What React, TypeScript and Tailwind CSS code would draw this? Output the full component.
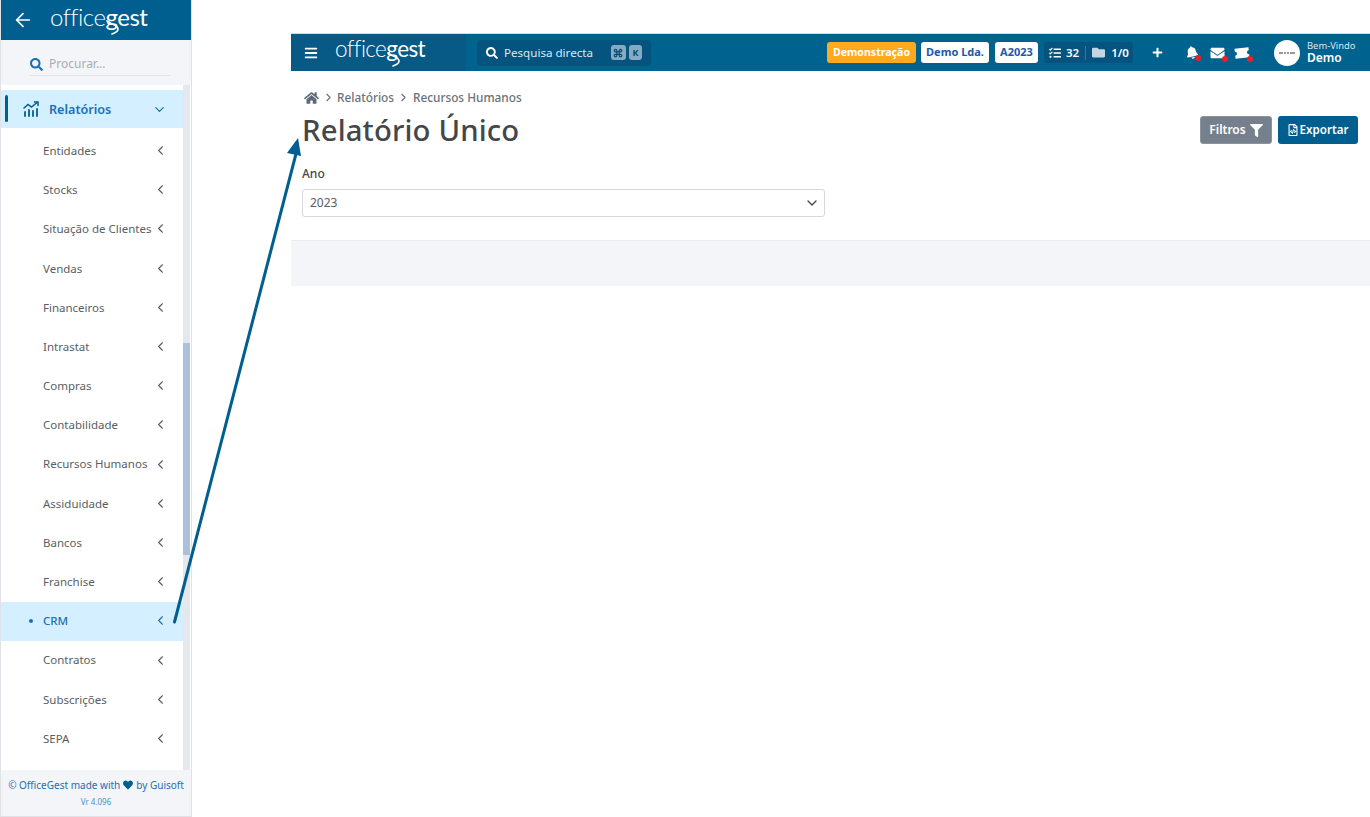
import { ChevronDown, ChevronLeft, ChevronRight, ArrowLeft, Command } from 'lucide-react'
import { FaBars, FaBell, FaEnvelope, FaFilter, FaFolder, FaHeart, FaHome, FaPlus, FaRegFileCode, FaSearch, FaTasks } from 'react-icons/fa'

const MENU = ['Entidades', 'Stocks', 'Situação de Clientes', 'Vendas', 'Financeiros', 'Intrastat', 'Compras', 'Contabilidade', 'Recursos Humanos', 'Assiduidade', 'Bancos', 'Franchise', 'CRM', 'Contratos', 'Subscrições', 'SEPA']

function Logo({ small }: { small?: boolean }) {
    return (
        <span className={`relative inline-block font-['Lato',sans-serif] font-light text-white leading-none ${small ? 'text-[22.5px] tracking-[-0.6px]' : 'text-[24px] tracking-[-0.5px]'}`}>
            office<span className="font-normal">gest</span>
            {/* swoosh on the g's tail */}
            <svg className={`absolute pointer-events-none ${small ? 'left-[51px] top-[13px]' : 'left-[55px] top-[14px]'}`} width="18" height="20" viewBox="0 0 18 20" fill="none">
                <path d="M2 2c2 3 11 3 11 8 0 3-3 4-6 5" stroke="white" strokeWidth="1.7" strokeLinecap="round" />
            </svg>
        </span>
    )
}

function Dot() {
    return <span className="absolute -right-[3px] -bottom-[2px] w-[6px] h-[6px] rounded-full bg-[#e8202a]" />
}

function Sidebar() {
    return (
        <aside className="w-[192px] h-[817px] shrink-0 flex flex-col bg-white border-r border-l border-[#dfe3e8] border-b">
            <div className="h-[40px] bg-[#005f8f] flex items-center shrink-0">
                <ArrowLeft className="w-[22px] h-[22px] text-white ml-[11px]" strokeWidth={1.75} />
                <div className="ml-[16px] -mt-[4px]"><Logo /></div>
            </div>
            <div className="h-[45px] bg-[#f4f5f8] shrink-0 pt-[14px] pl-[29px] pr-[21px]">
                <div className="flex items-center gap-[6px] border-b border-[#e2e5ea] h-[22px] pb-[1px]">
                    <FaSearch className="w-[13px] h-[13px] text-[#1b6fb5]" />
                    <span className="text-[12px] text-[#a9adb3]">Procurar...</span>
                </div>
            </div>
            <div className="flex-1 flex min-h-0">
                <div className="w-[182px] pt-[5px]">
                    <div className="h-[38px] bg-[#d4efff] flex items-center relative">
                        <span className="absolute left-[4px] top-[5px] w-[3px] h-[27px] rounded bg-[#005f8f]" />
                        <svg className="ml-[22px]" width="17" height="16" viewBox="0 0 17 16" fill="none" stroke="#005f8f" strokeWidth="1.5" strokeLinecap="round">
                            <path d="M1 7l4-3.5 3.5 2.5L14 1.5" />
                            <path d="M11.5 1H15v3.5" />
                            <path d="M2 11v4M6 9v6M10 10v5M14 8v7" strokeWidth="1.8" />
                        </svg>
                        <span className="ml-[9px] text-[12.6px] font-semibold text-[#1b6fb5] mt-[3px]">Relatórios</span>
                        <ChevronDown className="ml-auto mr-[16px] w-[15px] h-[15px] text-[#1b6fb5]" strokeWidth={2} />
                    </div>
                    <div className="pt-[4px]">
                        {MENU.map(item => {
                            const active = item === 'CRM'
                            return (
                                <div key={item} className={`h-[39.2px] pb-[2px] flex items-center relative ${active ? 'bg-[#d4efff] text-[#1b6fb5] font-medium' : 'text-[#5a5e63]'}`}>
                                    {active && <span className="absolute left-[28px] w-[4px] h-[4px] rounded-full bg-[#1b6fb5]" />}
                                    <span className="ml-[42px] text-[11.5px] whitespace-nowrap">{item}</span>
                                    <ChevronLeft className={`absolute left-[152px] w-[15px] h-[15px] ${active ? 'text-[#1b6fb5]' : 'text-[#5a5e63]'}`} strokeWidth={1.75} />
                                </div>
                            )
                        })}
                    </div>
                </div>
                <div className="w-[7px] bg-[#e4e7ec] flex flex-col">
                    <div className="h-[258px]" />
                    <div className="h-[212px] bg-[#a9c1da]" />
                </div>
            </div>
            <div className="h-[46px] shrink-0 bg-[#f4f5f8] flex flex-col items-center pt-[8px]">
                <div className="text-[10px] text-[#1b6fb5] whitespace-nowrap leading-[14px] flex items-center gap-[3px]">
                    © OfficeGest made with <FaHeart className="w-[10px] h-[10px] text-[#005f8f]" /> by Guisoft
                </div>
                <div className="text-[8px] text-[#4f8fc4] mt-[4px]">Vr 4.096</div>
            </div>
        </aside>
    )
}

function TopBar() {
    return (
        <header className="h-[38px] bg-[#00628f] flex items-center text-white border-t border-[#cfdde6]">
            <div className="w-[175px] h-full bg-[#075a85] flex items-center shrink-0">
                <FaBars className="ml-[13px] w-[14px] h-[14px]" />
                <div className="ml-[17px] -mt-[4px]"><Logo small /></div>
            </div>
            <div className="ml-[11px] w-[174px] h-[26px] rounded bg-[#05537f] flex items-center pl-[9px] shrink-0">
                <FaSearch className="w-[12px] h-[12px]" />
                <span className="ml-[6px] text-[11.6px] text-[#dce8f0] whitespace-nowrap">Pesquisa directa</span>
                <span className="ml-[18px] w-[15px] h-[15px] rounded-[3px] bg-[#86aac1] flex items-center justify-center"><Command className="w-[10px] h-[10px] text-[#0a4e75]" strokeWidth={3} /></span>
                <span className="ml-[3px] w-[13px] h-[15px] rounded-[3px] bg-[#86aac1] text-[#0a4e75] text-[9px] font-bold flex items-center justify-center">K</span>
            </div>
            <div className="ml-auto flex items-center h-full">
                <span className="h-[21px] w-[89px] rounded-[3px] bg-[#ffa91f] text-white text-[10.6px] font-bold flex items-center justify-center">Demonstração</span>
                <span className="ml-[5px] h-[21px] w-[68px] rounded-[3px] bg-white text-[#1d5aa6] text-[11px] font-bold flex items-center justify-center">Demo Lda.</span>
                <span className="ml-[6px] h-[21px] w-[43px] rounded-[3px] bg-white text-[#1d5aa6] text-[11px] font-bold flex items-center justify-center">A2023</span>
                <div className="ml-[6px] h-[21px] w-[89px] rounded-[3px] bg-[#05537f] flex items-center pl-[5px] text-[11.5px] font-semibold">
                    <FaTasks className="w-[12px] h-[12px]" />
                    <span className="ml-[5px]">32</span>
                    <span className="ml-[6px] w-px h-[14px] bg-[#2f7aa5]" />
                    <FaFolder className="ml-[6px] w-[13px] h-[13px] text-[#c4d6e2]" />
                    <span className="ml-[6px]">1/0</span>
                </div>
                <FaPlus className="ml-[19px] w-[11px] h-[11px]" />
                <span className="ml-[23px] relative"><FaBell className="w-[12px] h-[13px] -rotate-12" /><Dot /></span>
                <span className="ml-[12px] relative"><FaEnvelope className="w-[15px] h-[14px]" /><Dot /></span>
                <span className="ml-[9px] relative">
                    <svg className="block -rotate-6" width="16" height="14" viewBox="0 0 16 14" fill="white">
                        <path d="M1 2h14v3a2 2 0 0 0 0 4v3H1V9a2 2 0 0 0 0-4z" />
                    </svg>
                    <Dot />
                </span>
                <span className="ml-[24px] w-[26px] h-[26px] rounded-full bg-white flex items-center justify-center">
                    <svg width="16" height="4" viewBox="0 0 16 4" stroke="#333" strokeWidth="1"><path d="M0 2h4M6 1v2M8 2h2M12 1v2M13 2h3" /></svg>
                </span>
                <div className="ml-[7px] mr-[15px] w-[48px] flex flex-col pt-[1px]">
                    <span className="text-[9.4px] leading-[10px] text-[#dce8f0] whitespace-nowrap">Bem-Vindo</span>
                    <span className="text-[12px] leading-[14px] font-semibold">Demo</span>
                </div>
            </div>
        </header>
    )
}

function Content() {
    return (
        <main className="flex-1 min-w-0 pt-[33px]">
            <TopBar />
            <div className="pl-[11px] pr-[12px] pt-[18px] relative">
                <div className="flex items-center text-[11.8px] font-medium text-[#6b7178] h-[17px] ml-[2px]">
                    <FaHome className="w-[15px] h-[14px] text-[#5f6b78]" />
                    <ChevronRight className="ml-[3px] w-[13px] h-[13px]" strokeWidth={2} />
                    <span className="ml-[2px]">Relatórios</span>
                    <ChevronRight className="ml-[3px] w-[13px] h-[13px]" strokeWidth={2} />
                    <span className="ml-[3px]">Recursos Humanos</span>
                </div>
                <div className="flex items-start justify-between mt-[4px]">
                    <h1 className="text-[29.3px] leading-[40px] font-medium text-[#444649] tracking-[0.15px]">Relatório Único</h1>
                    <div className="flex gap-[6px] mt-[6px]">
                        <button className="h-[28px] w-[72px] rounded-[3px] bg-[#75808c] border border-[#8a949f] text-white text-[12px] font-semibold flex items-center justify-center gap-[4px]">
                            Filtros <FaFilter className="w-[13px] h-[13px]" />
                        </button>
                        <button className="h-[28px] w-[80px] rounded-[3px] bg-[#005f8f] text-white text-[11.6px] font-semibold flex items-center justify-center gap-[2px]">
                            <FaRegFileCode className="w-[10px] h-[12px]" /> Exportar
                        </button>
                    </div>
                </div>
                <label className="block mt-[16px] text-[12px] font-medium text-[#444649] leading-[16px]">Ano</label>
                <div className="mt-[7px] w-[523px] h-[28px] rounded-[3px] border border-[#d5d8dc] flex items-center px-[7px] text-[12px] text-[#5a5e63]">
                    2023
                    <ChevronDown className="ml-auto -mr-[3px] w-[16px] h-[16px] text-[#444649]" strokeWidth={2} />
                </div>
            </div>
            <div className="mt-[23px] h-[46px] bg-[#f4f5f8] border-t border-[#e9ebee]" />
        </main>
    )
}

export default function App() {
    return (
        <div className="w-[1370px] h-[817px] overflow-hidden bg-white flex gap-[99px] relative font-['Noto_Sans',sans-serif]">
            <Sidebar />
            <Content />
            <svg className="absolute left-0 top-0 pointer-events-none" width="1370" height="817" fill="none">
                <line x1="174.5" y1="622" x2="297" y2="150" stroke="#005f8f" strokeWidth="3" strokeLinecap="round" />
                <polygon points="298,138 287,153 301,156" fill="#005f8f" />
            </svg>
        </div>
    )
}
